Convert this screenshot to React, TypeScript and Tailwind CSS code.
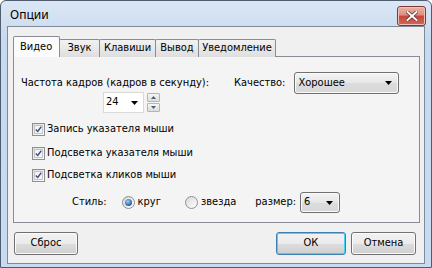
import React from "react";

const F = { fontFamily: '"DejaVu Sans Condensed", "DejaVu Sans", sans-serif' };

function Arrow() {
  return (
    <svg width="7" height="4" viewBox="0 0 7 4">
      <path d="M0 0H7L3.5 4Z" fill="#000" />
    </svg>
  );
}

function Check() {
  return (
    <div className="w-[13px] h-[13px] border border-[#8f8f8f] bg-[linear-gradient(135deg,#dcdcdc,#ffffff)] flex items-center justify-center">
      <div className="w-[9px] h-[9px] border border-[#c4c4c4] bg-[#f4f4f4] flex items-center justify-center">
        <svg width="9" height="9" viewBox="0 0 9 9">
          <path d="M1 4.5L3.5 7L8 1" stroke="#3b4f8a" strokeWidth="1.8" fill="none" />
        </svg>
      </div>
    </div>
  );
}

function Radio({ on }: { on?: boolean }) {
  return (
    <div className="w-[13px] h-[13px] rounded-full border border-[#8f8f8f] bg-[linear-gradient(135deg,#d8d8d8,#ffffff)] flex items-center justify-center">
      {on && <div className="w-[7px] h-[7px] rounded-full bg-[radial-gradient(circle_at_40%_35%,#9fd0f5,#1f5ea8_70%)]" />}
    </div>
  );
}

function Btn({ children, w, def }: { children: React.ReactNode; w: string; def?: boolean }) {
  return (
    <div
      className={`${w} h-[23px] rounded-[3px] border ${def ? "border-[#3c7fb1] shadow-[inset_0_0_0_1px_#48d1fc]" : "border-[#707070] shadow-[inset_0_0_0_1px_#fbfbfb]"} bg-[linear-gradient(#f2f2f2_0%,#ebebeb_50%,#dddddd_51%,#cfcfcf_100%)] flex items-center justify-center text-[11px] text-black`}
    >
      {children}
    </div>
  );
}

export default function App() {
  return (
    <div className="w-[432px] h-[268px] bg-white">
      <div className="w-[432px] h-[268px] border border-[#4e5d6f] rounded-t-[6px] bg-[linear-gradient(#dbe7f5,#c7d9ee_40px,#c9dbf0)] flex flex-col px-[6px] pb-[3px]">
        <div className="h-[25px] flex items-center justify-between">
          <span className="pl-[3px] pt-[2px] text-[12px] text-black" style={{ fontFamily: '"Noto Sans", sans-serif' }}>
            Опции
          </span>
          <div className="w-[29px] h-[20px] mt-[5px] -mr-[1px] rounded-[3px] border border-[#7d3b33] bg-[linear-gradient(#eab3a6_0%,#dd8e80_45%,#c6473a_50%,#d0685a_100%)] flex items-center justify-center shadow-[inset_0_0_0_1px_#f3c2b9]">
            <svg width="12" height="10" viewBox="0 0 12 10">
              <path d="M1.5 1L10.5 9M10.5 1L1.5 9" stroke="#5a2a25" strokeWidth="3.4" strokeLinecap="square" />
              <path d="M1.5 1L10.5 9M10.5 1L1.5 9" stroke="#ffffff" strokeWidth="2" strokeLinecap="square" />
            </svg>
          </div>
        </div>
        <div className="flex-1 border border-[#7d8a99] bg-[#f0f0f0] flex flex-col pt-[9px] px-[5px] text-[11px] text-black" style={F}>
          <div className="flex items-end h-[21px] relative z-10">
            <div className="h-[21px] px-[6px] border border-b-0 border-[#898c95] bg-[#fbfbfb] flex items-center rounded-t-[2px] w-[47px]">
              Видео
            </div>
            {[
              ["Звук", "w-[41px]"],
              ["Клавиши", "w-[57px]"],
              ["Вывод", "w-[44px]"],
              ["Уведомление", "w-[78px]"],
            ].map(([t, w]) => (
              <div key={t} className={`${w} h-[18px] -ml-px border border-b-0 border-[#898c95] bg-[linear-gradient(#f2f2f2,#dedede)] flex items-center justify-center rounded-t-[2px]`}>
                {t}
              </div>
            ))}
          </div>
          <div className="w-[407px] h-[167px] border border-[#898c95] -mt-px bg-[#f4f4f4] flex flex-col px-[7px] pt-[17px]">
            <div className="flex">
              <div className="flex flex-col w-[212px]">
                <div className="h-[18px] flex items-center">Частота кадров (кадров в секунду):</div>
                <div className="flex items-center ml-[82px]">
                  <div className="w-[41px] h-[21px] border border-[#d9d9d9] bg-white flex items-center justify-between pl-[2px] pr-[5px]">
                    <span>24</span>
                    <Arrow />
                  </div>
                  <div className="ml-[3px] w-[13px] flex flex-col gap-[1px]">
                    {[0, 1].map((i) => (
                      <div key={i} className="h-[9px] border border-[#b5b5b5] rounded-[1px] bg-[linear-gradient(#f6f6f6,#dcdcdc)] flex items-center justify-center">
                        <svg width="5" height="3" viewBox="0 0 5 3">
                          <path d={i === 0 ? "M0 3H5L2.5 0Z" : "M0 0H5L2.5 3Z"} fill="#4a6080" />
                        </svg>
                      </div>
                    ))}
                  </div>
                </div>
              </div>
              <div className="flex items-start ml-[1px]">
                <div className="h-[18px] flex items-center">Качество:</div>
                <div className="ml-[9px] -mt-[2px] w-[105px] h-[22px] rounded-[3px] border border-[#707070] bg-[linear-gradient(#f4f4f4,#e6e6e6_50%,#dcdcdc_51%,#d8d8d8)] shadow-[inset_0_0_0_1px_#fafafa] flex items-center justify-between pl-[3px] pr-[6px]">
                  <span>Хорошее</span>
                  <Arrow />
                </div>
              </div>
            </div>
            <div className="flex flex-col ml-[11px] mt-[10px]">
              <div className="h-[13px] flex items-center gap-[2px]">
                <Check />
                <span>Запись указателя мыши</span>
              </div>
              <div className="h-[13px] mt-[11px] flex items-center gap-[2px]">
                <Check />
                <span>Подсветка указателя мыши</span>
              </div>
              <div className="h-[13px] mt-[9px] flex items-center gap-[2px]">
                <Check />
                <span>Подсветка кликов мыши</span>
              </div>
            </div>
            <div className="flex items-center mt-[10px] h-[21px]">
              <span className="ml-[51px]">Стиль:</span>
              <div className="ml-[15px]"><Radio on /></div>
              <span className="ml-[3px]">круг</span>
              <div className="ml-[24px]"><Radio /></div>
              <span className="ml-[3px]">звезда</span>
              <span className="ml-[19px]">размер:</span>
              <div className="ml-[4px] w-[40px] h-[21px] rounded-[3px] border border-[#707070] bg-[linear-gradient(#f4f4f4,#e6e6e6_50%,#dcdcdc_51%,#d8d8d8)] shadow-[inset_0_0_0_1px_#fafafa] flex items-center justify-between pl-[3px] pr-[6px]">
                <span>6</span>
                <Arrow />
              </div>
            </div>
          </div>
          <div className="flex mt-[9px] pl-[1px]">
            <Btn w="w-[64px]">Сброс</Btn>
            <div className="flex-1" />
            <Btn w="w-[70px]" def>ОК</Btn>
            <div className="ml-[5px] mr-[3px]"><Btn w="w-[65px]">Отмена</Btn></div>
          </div>
        </div>
      </div>
    </div>
  );
}
